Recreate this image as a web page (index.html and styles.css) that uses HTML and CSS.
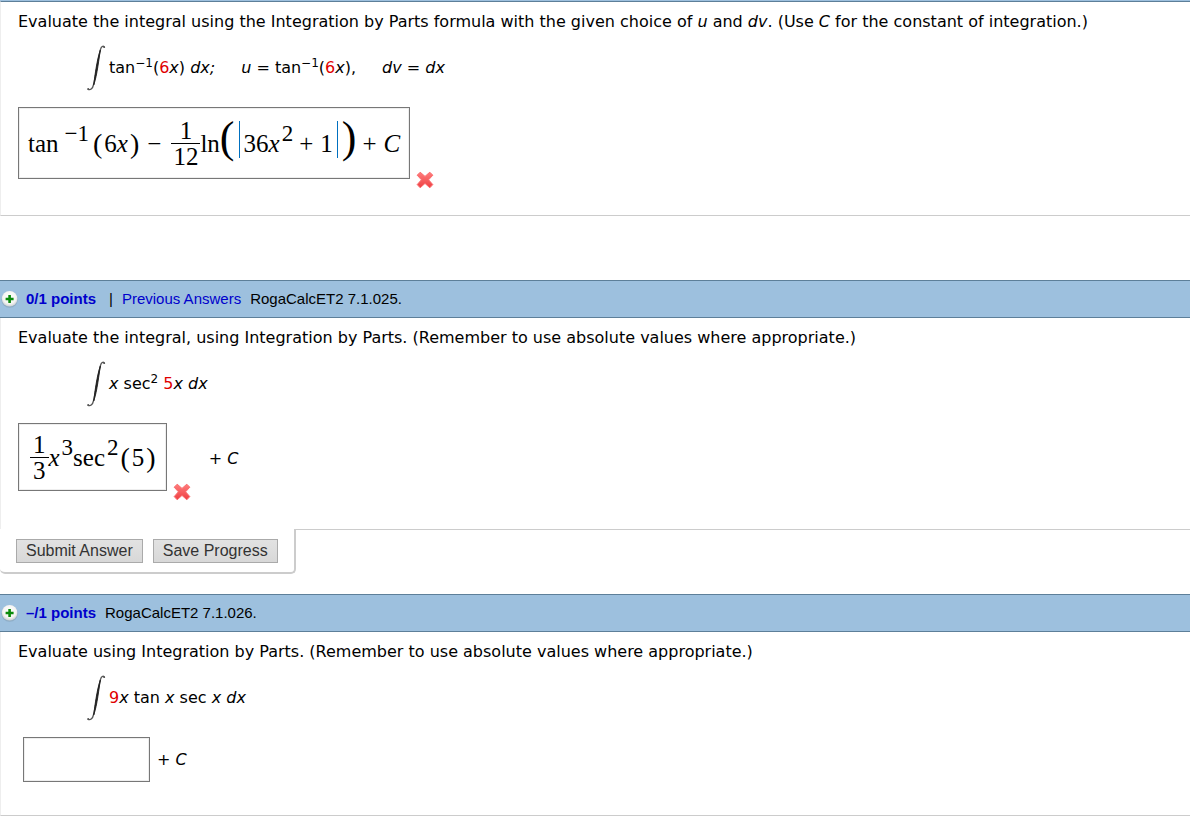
FILE: index.html
```html
<!DOCTYPE html>
<html lang="en">
<head>
<meta charset="utf-8">
<title>Integration by Parts</title>
<link rel="stylesheet" href="styles.css">
</head>
<body>
<svg class="defs" aria-hidden="true">
  <defs>
    <radialGradient id="disc" cx="50%" cy="40%" r="60%">
      <stop offset="0" stop-color="#fff"/><stop offset="0.7" stop-color="#f4f4f2"/><stop offset="1" stop-color="#c9cdd0"/>
    </radialGradient>
    <linearGradient id="red" x1="0" y1="0" x2="0" y2="1">
      <stop offset="0" stop-color="#ff7d7d"/><stop offset="1" stop-color="#ee3f42"/>
    </linearGradient>
    <symbol id="plus" viewBox="0 0 18 18">
      <circle cx="8.6" cy="9.6" r="8.2" fill="#7f99ad" opacity="0.5"/>
      <circle cx="8.6" cy="8.8" r="7.8" fill="url(#disc)"/>
      <path d="M8.6 5v8M4.6 9h8" stroke="#0b8a0b" stroke-width="2.6"/>
    </symbol>
    <symbol id="wrong" viewBox="0 0 18 18">
      <path d="M4.2 1.2 9 5.4 13.8 1.2 16.8 4.2 12.6 8.8 16.8 13.6 13.8 16.8 9 12.4 4.2 16.8 1.2 13.6 5.4 8.8 1.2 4.2Z" fill="url(#red)" stroke="#fb6a6c" stroke-width="1" stroke-linejoin="round"/>
    </symbol>
    <symbol id="integral" viewBox="0 0 20 46">
      <path d="M17.6 2.4C16.8 0.6 14.4 0.8 13.6 4C11.6 11 9 29 6.6 39.5C5.6 44 3.2 45.6 0.8 44.2" fill="none" stroke="#555" stroke-width="1.3"/>
      <path d="M13.4 5C12 12 10.4 30 6.7 40C8 30 10 14 13.4 5Z" fill="#222" stroke="#222" stroke-width="0.9"/>
      <circle cx="17.2" cy="2.2" r="0.9" fill="#555"/><circle cx="1.2" cy="44" r="1" fill="#555"/>
    </symbol>
  </defs>
</svg>

<main>
  <section class="question first">
    <div class="body">
      <p class="prompt">Evaluate the integral using the Integration by Parts formula with the given choice of <i>u</i> and <i>dv</i>. (Use <i>C</i> for the constant of integration.)</p>
      <div class="formula">
        <svg class="integral" role="img" aria-label="integral"><use href="#integral"/></svg>
        <span>tan<sup>−1</sup>(<b>6</b><i>x</i>) <i>dx;</i></span>
        <span class="clause"><i>u</i> = tan<sup>−1</sup>(<b>6</b><i>x</i>),</span>
        <span class="clause"><i>dv</i> = <i>dx</i></span>
      </div>
      <div class="answer">
        <div class="entry" role="textbox" tabindex="0" aria-label="Antiderivative">
          <span class="fn">tan</span><span class="exp inverse">−1</span><span class="paren">(</span><span>6<i>x</i></span><span class="paren">)</span><span class="op">−</span>
          <span class="frac"><span>1</span><span>12</span></span><span>ln</span><span class="paren tall">(</span><span class="bar"></span><span>36<i>x</i></span><span class="exp">2</span><span class="op">+</span><span>1</span><span class="bar"></span><span class="paren tall">)</span><span class="op">+</span><i>C</i>
        </div>
        <svg class="mark" role="img" aria-label="Incorrect"><use href="#wrong"/></svg>
      </div>
    </div>
  </section>

  <section class="question">
    <header class="bar-head">
      <svg class="plus" role="img" aria-label="Expand"><use href="#plus"/></svg>
      <a class="points" href="#q25">0/1 points</a>
      <span class="sep">|</span>
      <a href="#previous">Previous Answers</a>
      <span class="ref">RogaCalcET2 7.1.025.</span>
    </header>
    <div class="body open" id="q25">
      <p class="prompt">Evaluate the integral, using Integration by Parts. (Remember to use absolute values where appropriate.)</p>
      <div class="formula">
        <svg class="integral" role="img" aria-label="integral"><use href="#integral"/></svg>
        <span><i>x</i> sec<sup>2</sup> <b>5</b><i>x dx</i></span>
      </div>
      <div class="answer">
        <div class="entry short" role="textbox" tabindex="0" aria-label="Antiderivative">
          <span class="frac"><span>1</span><span>3</span></span><i>x</i><span class="exp">3</span><span>sec</span><span class="exp">2</span><span class="paren">(</span><span>5</span><span class="paren">)</span>
        </div>
        <svg class="mark" role="img" aria-label="Incorrect"><use href="#wrong"/></svg>
        <span class="constant">+ <i>C</i></span>
      </div>
    </div>
    <div class="actions">
      <div class="tab">
        <button type="button">Submit Answer</button>
        <button type="button">Save Progress</button>
      </div>
      <div class="rule"></div>
    </div>
  </section>

  <section class="question">
    <header class="bar-head">
      <svg class="plus" role="img" aria-label="Expand"><use href="#plus"/></svg>
      <a class="points" href="#q26">–/1 points</a>
      <span class="ref">RogaCalcET2 7.1.026.</span>
    </header>
    <div class="body" id="q26">
      <p class="prompt">Evaluate using Integration by Parts. (Remember to use absolute values where appropriate.)</p>
      <div class="formula">
        <svg class="integral" role="img" aria-label="integral"><use href="#integral"/></svg>
        <span><b>9</b><i>x</i> tan <i>x</i> sec <i>x dx</i></span>
      </div>
      <div class="blank">
        <input type="text" id="a26" aria-label="Antiderivative">
        <label for="a26">+ <i>C</i></label>
      </div>
    </div>
  </section>
</main>
</body>
</html>
```

FILE: styles.css
```css
* { box-sizing: border-box; }
body { margin: 0; background: #fff; color: #000; font: 16px/20px Verdana, "DejaVu Sans", sans-serif; }
.defs { position: absolute; width: 0; height: 0; }
svg { display: block; flex: none; }

.body { border-left: 1px solid #eee; border-bottom: 1px solid #ccc; padding: 10px 17px 33px; }
.first { border-top: 1px solid #9dc0de; margin-bottom: 64px; }
.first .body { border-top: 1px solid #5d7f99; padding-bottom: 36px; }
.body.open { border-bottom: 0; padding-bottom: 38px; }
.prompt { margin: 0; }

.formula { display: flex; align-items: center; margin: 13px 0 16px 69px; }
.integral { width: 20px; height: 46px; margin-right: 2px; }
.clause { margin-left: 26px; }
.formula b { color: #e00000; font-weight: normal; }
.formula sup { font-size: 12px; line-height: 0; vertical-align: 6px; }

.answer { display: flex; align-items: flex-end; }
.entry { display: flex; align-items: center; height: 72px; padding: 0 9px; border: 1px solid #777; box-shadow: inset 0 0 0 1px #eee; font: 25px/25px "Liberation Serif", serif; }
.entry.short { height: 68px; padding: 0 8px 0 11px; }
.fn { margin-right: 4px; }
.exp { font-size: 23px; margin: 0 0 20px 2px; }
.inverse { margin-right: 2px; }
.paren { font-size: 28px; margin: 0 2px; }
.tall { font-size: 44px; margin: 0 0 11px; }
.op { margin: 0 7px 0 6px; }
.bar { width: 1px; height: 37px; margin: 0 4px 8px; background: #0070c0; }
.frac { display: flex; flex-direction: column; align-items: center; }
.frac span { padding: 0 2px; }
.op + .frac { margin-left: 3px; }
.short .frac span { padding: 0 3px; }
.frac span:last-child { align-self: stretch; border-top: 1px solid #000; text-align: center; }
.mark { width: 18px; height: 18px; margin: 0 0 -10px 6px; }
.constant { margin: 0 0 22px 18px; }

.bar-head { display: flex; align-items: center; height: 38px; padding-left: 1px; border: solid #5d7f99; border-width: 1px 0; background: #9dc0de; font: 15px/18px "Liberation Sans", Arial, sans-serif; }
.plus { width: 18px; height: 18px; margin-right: 7px; }
.bar-head a { color: #00c; text-decoration: none; }
.points { font-weight: bold; }
.sep { margin: 0 9px 0 13px; }
.ref { margin-left: 9px; }

.actions { display: flex; align-items: flex-start; margin-bottom: 20px; }
.tab { display: flex; gap: 10px; padding: 10px 16px 9px; border-right: 2px solid #ccc; border-bottom: 2px solid #ccc; border-radius: 0 0 5px 5px; }
.rule { flex: 1; border-top: 1px solid #ccc; }
button { height: 24px; padding: 0 9px; border: 1px solid #aaa; background: linear-gradient(#e2e2e2, #d8d8d8); color: #333; font: 16px/20px "Liberation Sans", Arial, sans-serif; }

.blank { display: flex; align-items: center; gap: 7px; padding-left: 5px; }
.blank input { width: 127px; height: 45px; border: 1px solid #777; box-shadow: inset 0 0 0 1px #eee; }
```
